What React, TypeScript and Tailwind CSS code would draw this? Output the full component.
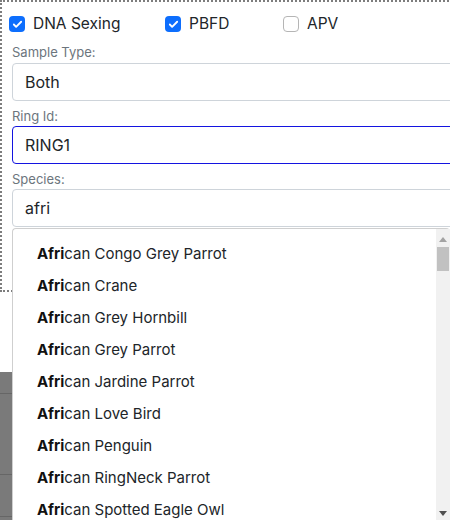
import { Check } from 'lucide-react';

const species = [
  'African Congo Grey Parrot',
  'African Crane',
  'African Grey Hornbill',
  'African Grey Parrot',
  'African Jardine Parrot',
  'African Love Bird',
  'African Penguin',
  'African RingNeck Parrot',
  'African Spotted Eagle Owl',
];

const query = 'afri';

interface BoxProps {
  label: string;
  checked?: boolean;
  width: string;
}

const CheckItem = ({ label, checked, width }: BoxProps) => (
  <label className={`flex items-center gap-2 ${width}`}>
    {checked ? (
      <span className="flex h-4 w-4 items-center justify-center rounded-[4px] bg-[#0d6efd]">
        <Check size={11} strokeWidth={4} className="text-white" />
      </span>
    ) : (
      <span className="h-4 w-4 rounded-[4px] border border-[#b5b5b5] bg-white" />
    )}
    <span className="text-[15.5px] text-[#212529]">{label}</span>
  </label>
);

const FieldLabel = ({ children }: { children: React.ReactNode }) => (
  <div className="pt-[6px] pb-[1px] text-[13px] leading-[18px] text-[#6c757d]">{children}</div>
);

const App = () => {
  return (
    <div
      className="relative h-[520px] w-[450px] overflow-hidden bg-white"
      style={{ fontFamily: 'Inter, "Noto Sans", sans-serif' }}
    >
      <div className="w-[520px] border-2 border-dotted border-[#7d7d7d] pt-[6px] pl-[10px] h-[292px]">
        <div className="-ml-[3px] flex h-[32px] items-center">
          <CheckItem label="DNA Sexing" checked width="w-[156px]" />
          <CheckItem label="PBFD" checked width="w-[118px]" />
          <CheckItem label="APV" width="w-[100px]" />
        </div>
        <div className="pt-[3px] pb-[2px] text-[13px] leading-[18px] text-[#6c757d]">Sample Type:</div>
        <div className="flex h-[38px] items-center rounded-[4px] border border-[#ced4da] px-3 text-[16px] text-[#212529]">
          Both
        </div>
        <FieldLabel>Ring Id:</FieldLabel>
        <div className="flex h-[38px] items-center rounded-[4px] border border-[#1414e0] px-3 text-[16px] text-[#212529]">
          RING1
        </div>
        <FieldLabel>Species:</FieldLabel>
        <div className="flex h-[38px] items-center rounded-[4px] border border-[#ced4da] px-3 text-[16px] text-[#212529]">
          afri
        </div>
      </div>

      <div className="h-[80px]" />
      <div className="h-[160px] bg-[#7a7a7a]">
        <div className="h-[22px] border-b border-[#666]" />
        <div className="h-[81px] border-b border-[#666]" />
        <div className="h-[42px] border-b border-[#666]" />
      </div>

      <div className="absolute left-[12px] top-[228px] flex h-[300px] w-[438px] rounded-t-[4px] border-l border-t border-[#cfcfcf] bg-white">
        <ul className="flex-1 pt-[9px] pl-[24px]">
          {species.map((name) => (
            <li key={name} className="flex h-[32px] items-center text-[15px] text-[#212529]">
              <span className="font-bold text-[#111]">{name.slice(0, query.length)}</span>
              {name.slice(query.length)}
            </li>
          ))}
        </ul>
        <div className="flex w-[14px] flex-col items-center bg-[#f1f1f1]">
          <svg width="8" height="5" viewBox="0 0 8 5" className="mt-[8px]">
            <path d="M0 5 L4 0 L8 5 Z" fill="#a3a3a3" />
          </svg>
          <div className="mt-[5px] h-[24px] w-[12px] bg-[#c1c1c1]" />
          <div className="flex-1" />
          <svg width="8" height="5" viewBox="0 0 8 5" className="mb-[12px]">
            <path d="M0 0 L8 0 L4 5 Z" fill="#505050" />
          </svg>
        </div>
      </div>
    </div>
  );
};

export default App;
